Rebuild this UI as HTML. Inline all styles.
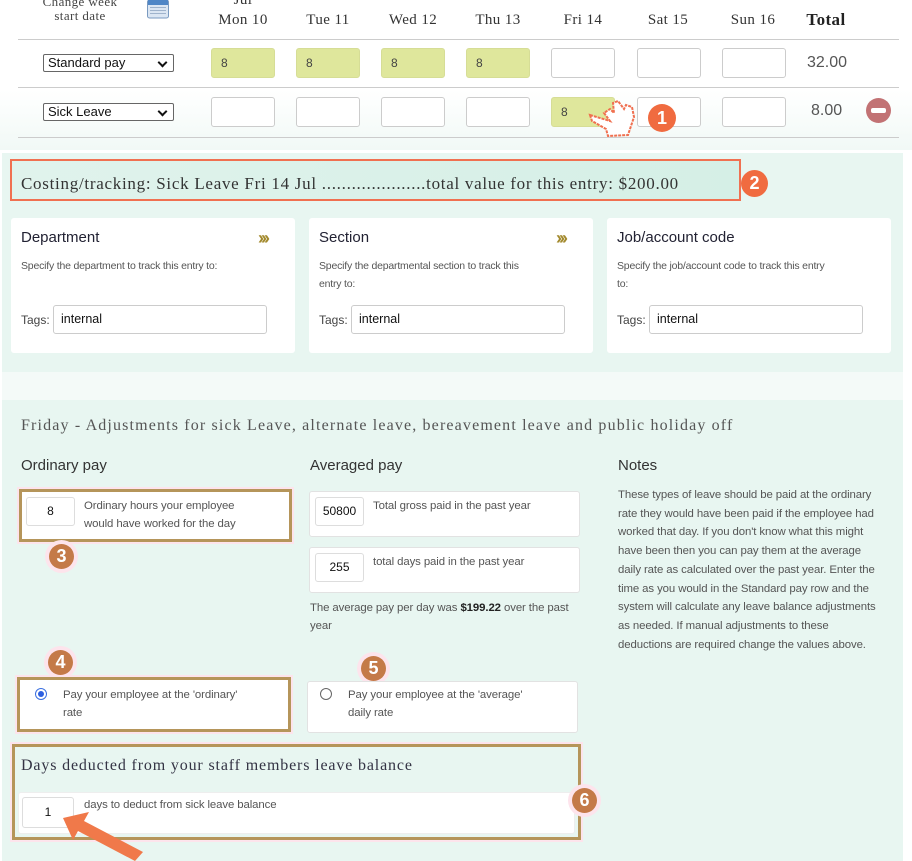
<!DOCTYPE html>
<html><head><meta charset="utf-8"><style>
*{margin:0;padding:0;box-sizing:border-box}
body{width:912px;height:861px;position:relative;overflow:hidden;background:#fff;font-family:"Liberation Sans",sans-serif;color:#444}
.a{position:absolute}
.hd{font-family:"Liberation Serif",serif;font-size:15px;color:#333;text-align:center;width:80px;letter-spacing:.4px}
.in{position:absolute;background:#fff;border:1px solid #ccc;border-radius:3px;height:30px;width:64px;font-size:12px;padding:7px 9px}
.g{background:#dfe79c;border-color:#d6dd96}
.line{position:absolute;left:18px;width:881px;height:1px;background:#ccc}
.sel{position:absolute;left:43px;width:131px;height:18px;border:1px solid #666;border-radius:2px;background:#fff;font-size:13px;padding:0 4px;line-height:16px;color:#111}
.sel:after{content:"";position:absolute;right:7px;top:4px;width:5px;height:5px;border-right:2px solid #111;border-bottom:2px solid #111;transform:rotate(45deg)}
.card{position:absolute;top:218px;width:284px;height:135px;background:#fff;border-radius:3px}
.card h3{position:absolute;left:10px;top:11px;font-family:"Liberation Sans",sans-serif;font-weight:normal;font-size:15px;color:#223}
.card p{position:absolute;left:10px;top:39px;width:212px;font-size:10.5px;line-height:18px;color:#555;letter-spacing:-.2px}
.card .t{position:absolute;left:10px;top:95px;font-size:12px;color:#444}
.card .ti{position:absolute;left:42px;top:87px;width:214px;height:29px;border:1px solid #ccc;border-radius:3px;font-size:12.5px;padding:6px 7px;color:#111}
.chev{position:absolute;left:247px;top:10px;color:#a38a2e;font-weight:bold;font-size:18px;letter-spacing:-3px}
.num{position:absolute;width:25px;height:25px;border-radius:50%;color:#fff;font-weight:bold;font-size:18px;text-align:center;line-height:25px;font-family:"Liberation Sans",sans-serif}
.o{background:#f06b40}
.b{background:#c47a48;box-shadow:0 0 0 4px #fde4ec}
.sm{font-size:11.4px;line-height:18px;color:#555;letter-spacing:-.1px}
.box{position:absolute;background:#fff;border:1px solid #e2e2e2;border-radius:3px}
.ol{border:3px solid #b5955a;border-radius:0;box-shadow:0 0 0 2px #fde4ec}
.si{position:absolute;background:#fff;border:1px solid #ddd;border-radius:3px;height:29px;font-size:12px;text-align:center;line-height:27px;color:#111}
</style></head><body>
<div class="a" style="left:0;top:0;width:912px;height:150px;background:linear-gradient(#fff,#fff 60%,#f1f9f6)"></div>
<div class="a hd" style="left:40px;top:-5px;font-size:13px;line-height:14px;color:#444">Change week<br>start date</div>
<svg class="a" style="left:147px;top:0" width="22" height="19"><rect x="0.5" y="0" width="21" height="18" rx="2" fill="#dbe6f3" stroke="#7a9ac0"/><rect x="1" y="0" width="20" height="5" fill="#4f86c6"/><g fill="#9fb3cc"><rect x="3" y="7" width="16" height="1"/><rect x="3" y="10" width="16" height="1"/><rect x="3" y="13" width="16" height="1"/></g></svg>
<div class="a hd" style="left:203px;top:-8px">Jul</div>
<div class="a hd" style="left:203px;top:12px">Mon 10</div>
<div class="a hd" style="left:288px;top:12px">Tue 11</div>
<div class="a hd" style="left:373px;top:12px">Wed 12</div>
<div class="a hd" style="left:458px;top:12px">Thu 13</div>
<div class="a hd" style="left:543px;top:12px">Fri 14</div>
<div class="a hd" style="left:628px;top:12px">Sat 15</div>
<div class="a hd" style="left:713px;top:12px">Sun 16</div>
<div class="a hd" style="left:786px;top:10px;font-weight:bold;font-size:17px;color:#222">Total</div>
<div class="line" style="top:39px"></div>
<div class="sel" style="top:54px">Standard pay</div>
<div class="in g" style="left:211px;top:48px">8</div>
<div class="in g" style="left:296px;top:48px">8</div>
<div class="in g" style="left:381px;top:48px">8</div>
<div class="in g" style="left:466px;top:48px">8</div>
<div class="in" style="left:551px;top:48px"></div>
<div class="in" style="left:637px;top:48px"></div>
<div class="in" style="left:722px;top:48px"></div>
<div class="a" style="left:807px;top:54px;font-size:16px;color:#555">32.00</div>
<div class="line" style="top:87px"></div>
<div class="sel" style="top:103px">Sick Leave</div>
<div class="in" style="left:211px;top:97px"></div>
<div class="in" style="left:296px;top:97px"></div>
<div class="in" style="left:381px;top:97px"></div>
<div class="in" style="left:466px;top:97px"></div>
<div class="in g" style="left:551px;top:97px">8</div>
<div class="in" style="left:637px;top:97px"></div>
<div class="in" style="left:722px;top:97px"></div>
<div class="a" style="left:811px;top:102px;font-size:16px;color:#555">8.00</div>
<div class="a" style="left:866px;top:98px;width:25px;height:25px;border-radius:50%;background:#c27274"><div class="a" style="left:5px;top:10px;width:15px;height:5px;background:#fff;border-radius:2px"></div></div>
<div class="line" style="top:137px"></div>
<svg class="a" style="left:588px;top:95px" width="60" height="46"><path d="M2 20 L22 26 L16 18 L22 14 L26 18 L25 8 L30 6 L36 14 L38 10 L44 12 L46 22 L40 40 L20 41 L18 34 L4 26 Z" fill="#fff" stroke="#f07050" stroke-width="2" stroke-dasharray="3 1"/></svg>
<div class="num o" style="left:648px;top:104px;width:28px;height:28px;line-height:28px">1</div>
<div class="a" style="left:2px;top:153px;width:901px;height:219px;background:#e8f6f1"></div>
<div class="a" style="left:10px;top:159px;width:731px;height:42px;border:2px solid #f07050;background:linear-gradient(90deg,#e0f3ec,#d5efe6)"></div>
<div class="a" style="left:21px;top:174px;font-family:'Liberation Serif',serif;font-size:17px;letter-spacing:.72px;color:#333;white-space:nowrap">Costing/tracking: Sick Leave Fri 14 Jul .....................total value for this entry: $200.00</div>
<div class="num o" style="left:741px;top:170px;width:27px;height:27px;line-height:27px">2</div>
<div class="card" style="left:11px"><h3>Department</h3><span class="chev">›››</span><p>Specify the department to track this entry to:</p><span class="t">Tags:</span><div class="ti">internal</div></div>
<div class="card" style="left:309px"><h3>Section</h3><span class="chev">›››</span><p>Specify the departmental section to track this entry to:</p><span class="t">Tags:</span><div class="ti">internal</div></div>
<div class="card" style="left:607px"><h3>Job/account code</h3><p>Specify the job/account code to track this entry to:</p><span class="t">Tags:</span><div class="ti">internal</div></div>
<div class="a" style="left:2px;top:372px;width:901px;height:28px;background:#f4faf8"></div>
<div class="a" style="left:2px;top:400px;width:901px;height:461px;background:#e8f6f1"></div>
<div class="a" style="left:21px;top:417px;font-family:'Liberation Serif',serif;font-size:16px;letter-spacing:1.15px;color:#555;white-space:nowrap">Friday - Adjustments for sick Leave, alternate leave, bereavement leave and public holiday off</div>
<div class="a" style="left:21px;top:457px;font-size:15px;color:#333">Ordinary pay</div>
<div class="a" style="left:310px;top:457px;font-size:15px;color:#333">Averaged pay</div>
<div class="a" style="left:618px;top:457px;font-size:15px;color:#333">Notes</div>
<div class="box ol" style="left:19px;top:489px;width:273px;height:53px"></div>
<div class="si" style="left:26px;top:497px;width:49px">8</div>
<div class="a sm" style="left:84px;top:497px">Ordinary hours your employee<br>would have worked for the day</div>
<div class="num b" style="left:49px;top:544px">3</div>
<div class="box" style="left:309px;top:491px;width:271px;height:46px"></div>
<div class="si" style="left:315px;top:497px;width:49px">50800</div>
<div class="a sm" style="left:373px;top:497px">Total gross paid in the past year</div>
<div class="box" style="left:309px;top:547px;width:271px;height:46px"></div>
<div class="si" style="left:315px;top:553px;width:49px">255</div>
<div class="a sm" style="left:373px;top:553px">total days paid in the past year</div>
<div class="a sm" style="left:310px;top:599px;width:275px">The average pay per day was <b style="color:#222">$199.22</b> over the past<br>year</div>
<div class="a sm" style="left:618px;top:486px;width:264px;line-height:18.7px">These types of leave should be paid at the ordinary rate they would have been paid if the employee had worked that day. If you don't know what this might have been then you can pay them at the average daily rate as calculated over the past year. Enter the time as you would in the Standard pay row and the system will calculate any leave balance adjustments as needed. If manual adjustments to these deductions are required change the values above.</div>
<div class="num b" style="left:48px;top:650px">4</div>
<div class="num b" style="left:361px;top:656px">5</div>
<div class="box ol" style="left:17px;top:677px;width:274px;height:55px"></div>
<div class="a" style="left:35px;top:688px;width:12px;height:12px;border-radius:50%;border:1px solid #3a6fe0;background:#fff"><div class="a" style="left:2px;top:2px;width:6px;height:6px;border-radius:50%;background:#2d5fe0"></div></div>
<div class="a sm" style="left:63px;top:686px">Pay your employee at the 'ordinary'<br>rate</div>
<div class="box" style="left:307px;top:681px;width:271px;height:52px"></div>
<div class="a" style="left:320px;top:688px;width:12px;height:12px;border-radius:50%;border:1px solid #666;background:#fff"></div>
<div class="a sm" style="left:348px;top:686px">Pay your employee at the 'average'<br>daily rate</div>
<div class="box ol" style="left:12px;top:744px;width:569px;height:96px;background:transparent"></div>
<div class="a" style="left:21px;top:757px;font-family:'Liberation Serif',serif;font-size:16px;letter-spacing:.85px;color:#334;white-space:nowrap">Days deducted from your staff members leave balance</div>
<div class="box" style="left:18px;top:792px;width:557px;height:42px;border-color:#eee"></div>
<div class="si" style="left:22px;top:797px;width:52px;height:31px;line-height:29px">1</div>
<div class="a sm" style="left:84px;top:796px">days to deduct from sick leave balance</div>
<div class="num b" style="left:572px;top:788px">6</div>
<svg class="a" style="left:55px;top:812px" width="90" height="49"><path d="M8 6 L34 0 L29 9 L88 40 L80 49 L23 19 L18 28 Z" fill="#f0794a"/></svg>
</body></html>
